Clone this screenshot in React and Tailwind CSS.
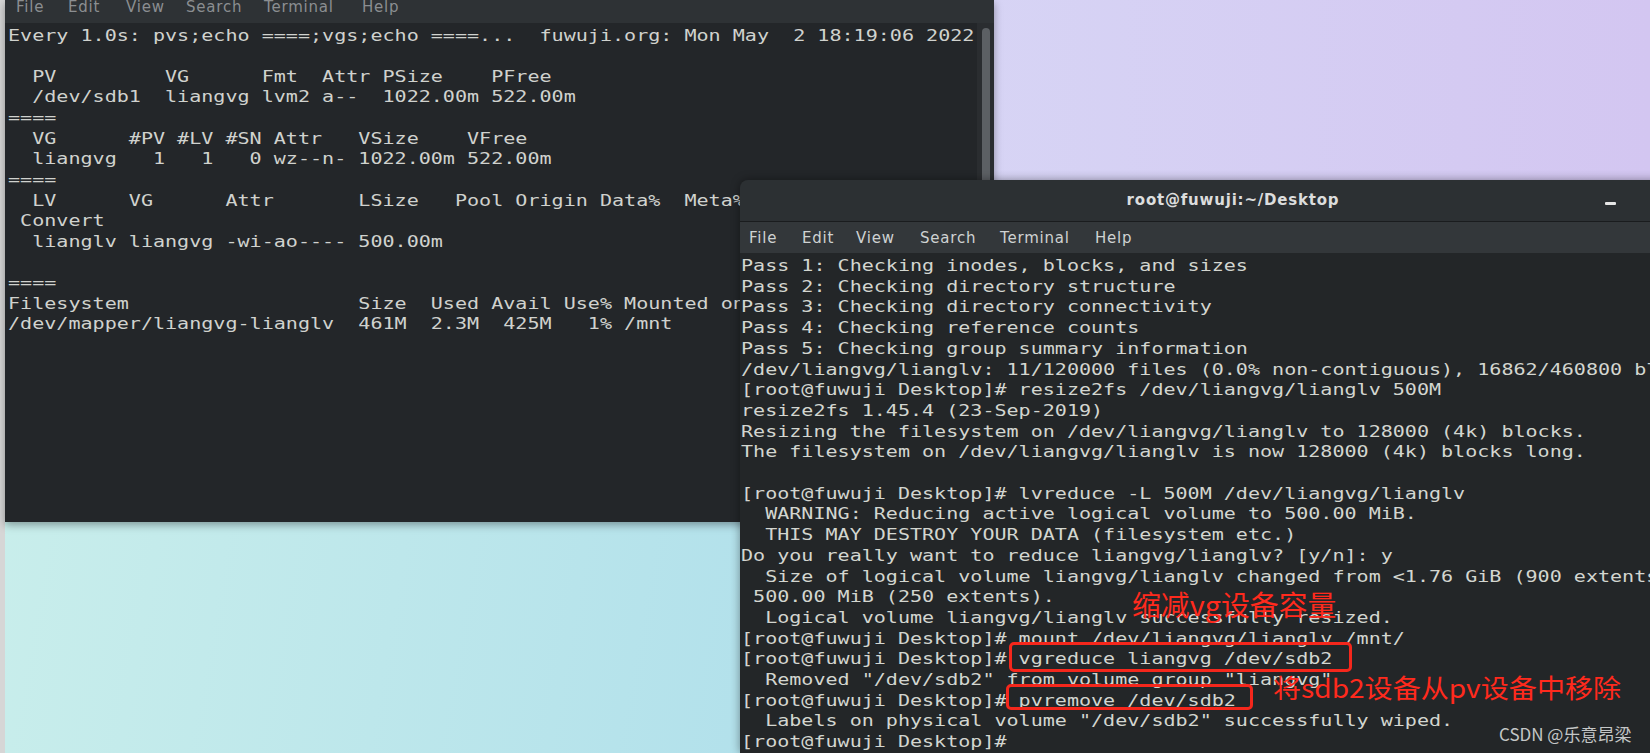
const backMenu = [
  ['File', 'w-[52px]'],
  ['Edit', 'w-[58px]'],
  ['View', 'w-[60px]'],
  ['Search', 'w-[78px]'],
  ['Terminal', 'w-[98px]'],
  ['Help', ''],
]

const frontMenu = [
  ['File', 'w-[53px]'],
  ['Edit', 'w-[54px]'],
  ['View', 'w-[64px]'],
  ['Search', 'w-[80px]'],
  ['Terminal', 'w-[95px]'],
  ['Help', ''],
]

// output of `watch` in the back terminal
const watchLines = [
  'Every 1.0s: pvs;echo ====;vgs;echo ====...  fuwuji.org: Mon May  2 18:19:06 2022',
  '',
  '  PV         VG      Fmt  Attr PSize    PFree  ',
  '  /dev/sdb1  liangvg lvm2 a--  1022.00m 522.00m',
  '====',
  '  VG      #PV #LV #SN Attr   VSize    VFree  ',
  '  liangvg   1   1   0 wz--n- 1022.00m 522.00m',
  '====',
  '  LV      VG      Attr       LSize   Pool Origin Data%  Meta%  Move Log Cpy%Sync',
  ' Convert',
  '  lianglv liangvg -wi-ao---- 500.00m',
  '',
  '====',
  'Filesystem                   Size  Used Avail Use% Mounted on',
  '/dev/mapper/liangvg-lianglv  461M  2.3M  425M   1% /mnt',
]

const shellLines = [
  'Pass 1: Checking inodes, blocks, and sizes',
  'Pass 2: Checking directory structure',
  'Pass 3: Checking directory connectivity',
  'Pass 4: Checking reference counts',
  'Pass 5: Checking group summary information',
  '/dev/liangvg/lianglv: 11/120000 files (0.0% non-contiguous), 16862/460800 blocks',
  '[root@fuwuji Desktop]# resize2fs /dev/liangvg/lianglv 500M',
  'resize2fs 1.45.4 (23-Sep-2019)',
  'Resizing the filesystem on /dev/liangvg/lianglv to 128000 (4k) blocks.',
  'The filesystem on /dev/liangvg/lianglv is now 128000 (4k) blocks long.',
  '',
  '[root@fuwuji Desktop]# lvreduce -L 500M /dev/liangvg/lianglv',
  '  WARNING: Reducing active logical volume to 500.00 MiB.',
  '  THIS MAY DESTROY YOUR DATA (filesystem etc.)',
  'Do you really want to reduce liangvg/lianglv? [y/n]: y',
  '  Size of logical volume liangvg/lianglv changed from <1.76 GiB (900 extents) to',
  ' 500.00 MiB (250 extents).',
  '  Logical volume liangvg/lianglv successfully resized.',
  '[root@fuwuji Desktop]# mount /dev/liangvg/lianglv /mnt/',
  '[root@fuwuji Desktop]# vgreduce liangvg /dev/sdb2',
  '  Removed "/dev/sdb2" from volume group "liangvg"',
  '[root@fuwuji Desktop]# pvremove /dev/sdb2',
  '  Labels on physical volume "/dev/sdb2" successfully wiped.',
  '[root@fuwuji Desktop]# ',
]

function MenuBar({ items, className }) {
  return (
    <div className={`flex shrink-0 font-['DejaVu_Sans',sans-serif] text-[15px] leading-[15px] tracking-[0.8px] ${className}`}>
      {items.map(([label, w]) => (
        <span key={label} className={w}>{label}</span>
      ))}
    </div>
  )
}

export default function App() {
  return (
    <div className="w-[1650px] h-[753px] overflow-hidden flex bg-[#d4d4d4]">
      <div className="w-[5px] shrink-0 bg-[#d6d6d6]" />

      <div className="relative flex-1 flex flex-col">
        {/* desktop wallpaper */}
        <div className="h-[376px] bg-[linear-gradient(to_right,#dbe4fb,#d8d9f6_45%,#d3c6f1)]" />
        <div className="flex-1 bg-[linear-gradient(100deg,#c9eeeb,#b1e0eb_50%,#97cee8)]" />

        {/* back terminal running watch */}
        <div className="absolute left-0 top-0 w-[989px] h-[522px] flex flex-col bg-[#232629] shadow-[0_3px_8px_rgba(0,0,0,0.35)]">
          <MenuBar items={backMenu} className="h-[23px] bg-[#2e3235] pl-[11px] text-[#8b8e91]" />
          <div className="flex-1 flex min-h-0">
            <div className="flex-1 overflow-hidden pt-[2.5px] pl-[3px]">
              <pre className="origin-top-left scale-x-[1.3376] font-['DejaVu_Sans_Mono',monospace] text-[15px] leading-[20.63px] text-[#d0d2ce]">
                {watchLines.join('\n')}
              </pre>
            </div>
            <div className="w-[17px] bg-[#2a2d30] py-[5px] flex justify-center">
              <div className="w-[8px] h-full rounded-full bg-[#5c6064]" />
            </div>
          </div>
        </div>

        {/* front terminal */}
        <div className="absolute left-[735px] top-[180px] w-[986px] h-[573px] rounded-tl-[8px] overflow-hidden flex flex-col bg-[#232628] shadow-[0_0_10px_rgba(0,0,0,0.4)]">
          <div className="h-[42px] shrink-0 border-b border-[#1a1c1e] bg-[#2c3033] grid grid-cols-[1fr_auto_1fr] items-center">
            <div />
            <span className="font-['DejaVu_Sans',sans-serif] font-bold text-[15px] tracking-[0.8px] text-[#dcdddd]">
              root@fuwuji:~/Desktop
            </span>
            <div className="self-stretch flex justify-end items-start pt-[22px] pr-[14px] gap-[37px]">
              <span className="w-[11px] h-[3px] rounded-[1px] bg-[#e6e6e6]" />
              <span className="w-[11px] h-[11px] -mt-[6px] border-2 border-[#e6e6e6]" />
              <span className="w-[11px] h-[11px] -mt-[6px] text-[#e6e6e6] text-[14px] leading-[11px]">✕</span>
            </div>
          </div>
          <MenuBar items={frontMenu} className="h-[31px] bg-[#33373a] pt-[9px] pl-[9px] text-[#cfd2d2]" />
          <div className="flex-1 overflow-hidden pt-[3px] pl-[1px]">
            <pre className="origin-top-left scale-x-[1.253] font-['DejaVu_Sans_Mono',monospace] text-[16px] leading-[20.7px] text-[#d3d6d0]">
              {shellLines.join('\n')}
            </pre>
          </div>
        </div>

        {/* red annotations */}
        <div className="absolute left-[1004px] top-[642px] w-[343px] h-[30px] rounded-[5px] border-[3px] border-[#f5271c]" />
        <div className="absolute left-[1001px] top-[684px] w-[247px] h-[26px] rounded-[5px] border-[3px] border-[#f5271c]" />
        <span className="absolute left-[1127px] top-[590px] origin-left scale-x-[1.03] whitespace-nowrap font-['Noto_Sans_CJK_SC',sans-serif] text-[28px] leading-none text-[#ff2a1d]">
          缩减vg设备容量
        </span>
        <span className="absolute left-[1268px] top-[674px] origin-left scale-x-[1.08] whitespace-nowrap font-['Noto_Sans_CJK_SC',sans-serif] text-[26px] leading-none text-[#ff2a1d]">
          将sdb2设备从pv设备中移除
        </span>
        <span className="absolute left-[1494px] top-[725px] whitespace-nowrap font-['Noto_Sans_CJK_SC',sans-serif] text-[17px] leading-none text-[#c4c6c6]">
          CSDN @乐意昂梁
        </span>
      </div>
    </div>
  )
}
